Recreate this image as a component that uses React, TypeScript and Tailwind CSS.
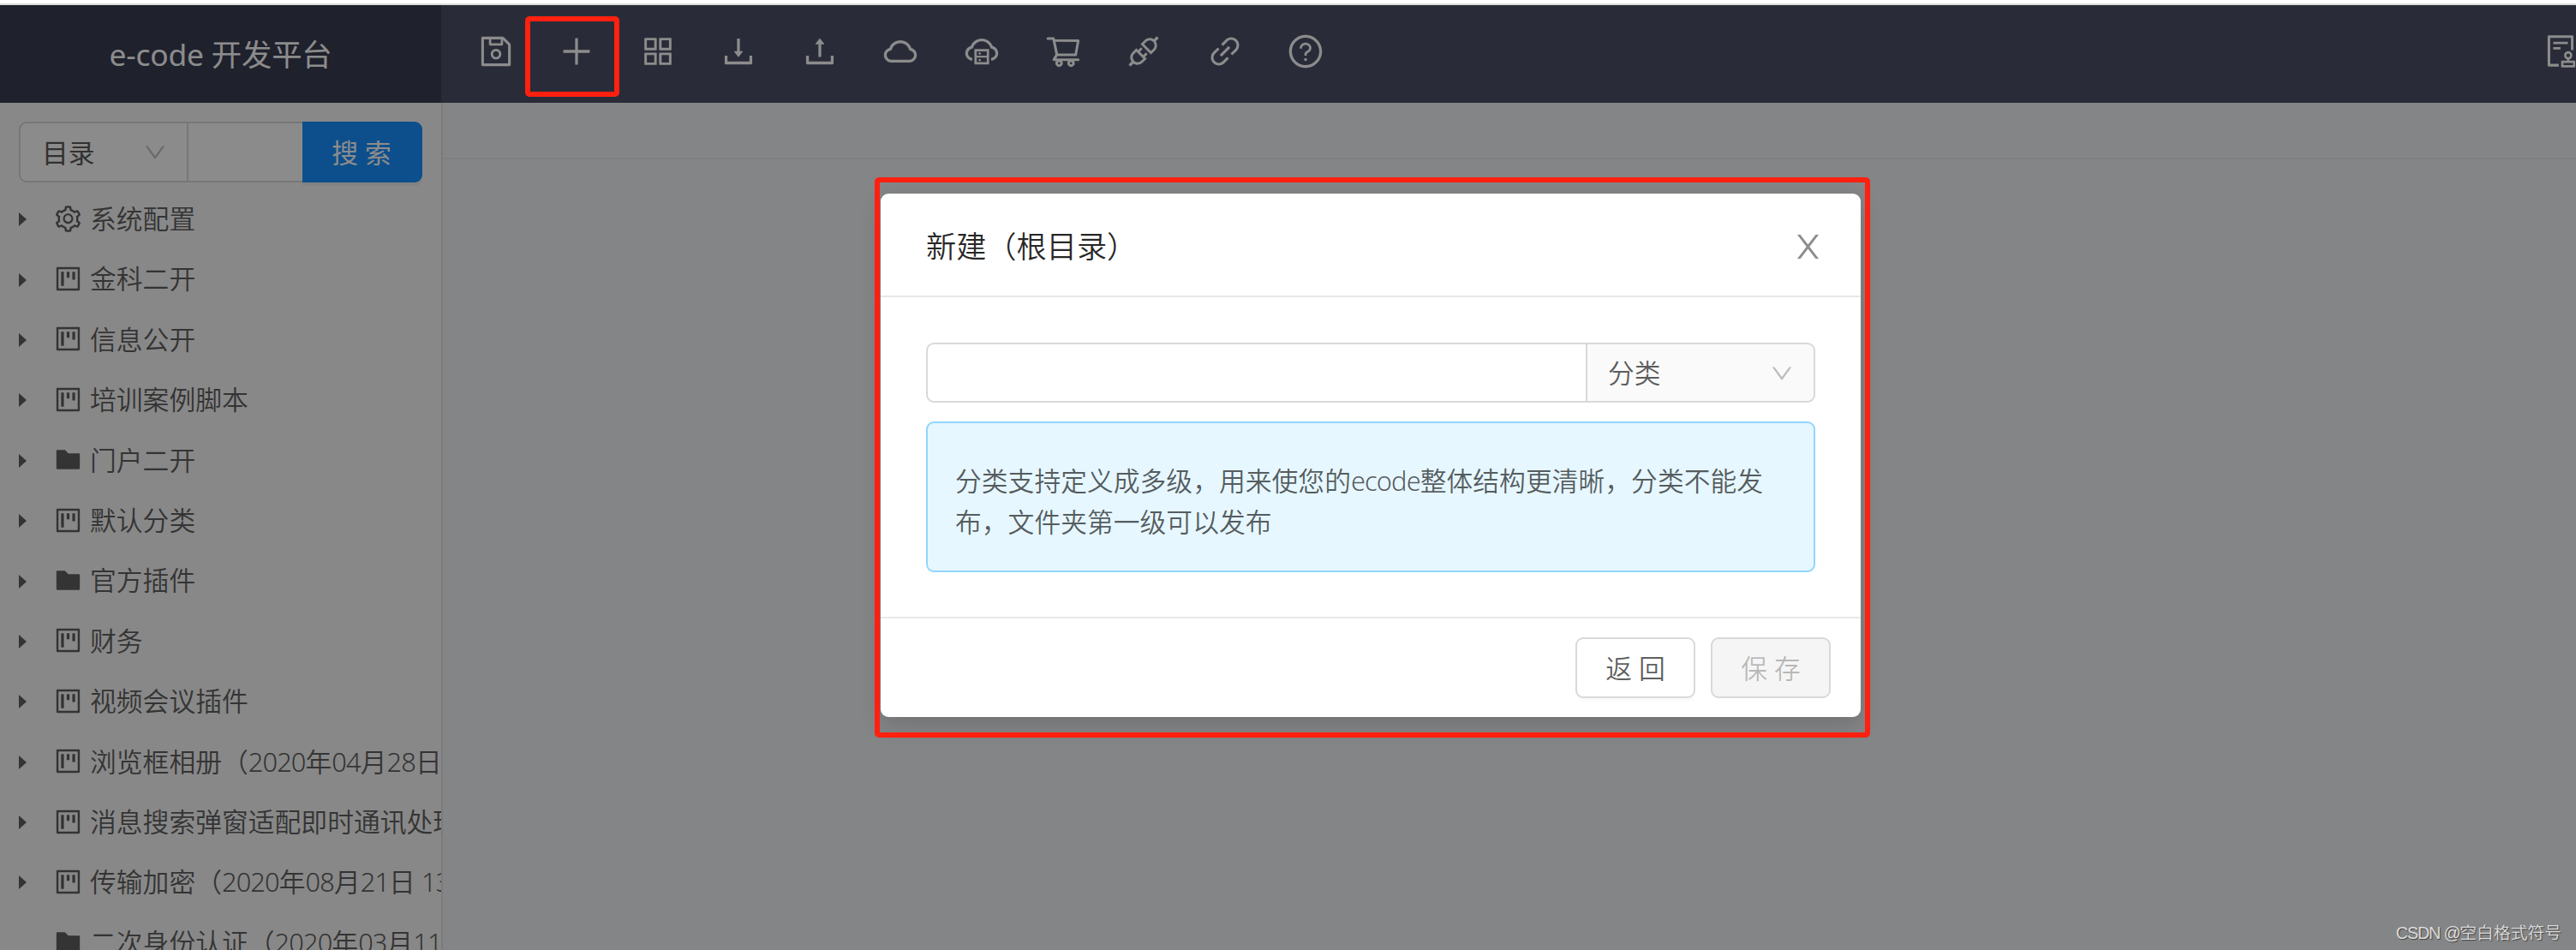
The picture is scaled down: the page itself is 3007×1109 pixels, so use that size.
import React from 'react';
import type { IconType } from 'react-icons';
import {
  AiFillFolder,
  AiOutlineApi,
  AiOutlineAppstore,
  AiOutlineAudit,
  AiOutlineCloud,
  AiOutlineCloudServer,
  AiOutlineDown,
  AiOutlineDownload,
  AiOutlineLink,
  AiOutlinePlus,
  AiOutlineProject,
  AiOutlineQuestionCircle,
  AiOutlineSave,
  AiOutlineSetting,
  AiOutlineShoppingCart,
  AiOutlineUpload,
} from 'react-icons/ai';

interface TreeNode {
  label: string;
  icon: IconType;
  leaf?: boolean;
}

const toolbar: IconType[] = [
  AiOutlineSave,
  AiOutlinePlus,
  AiOutlineAppstore,
  AiOutlineDownload,
  AiOutlineUpload,
  AiOutlineCloud,
  AiOutlineCloudServer,
  AiOutlineShoppingCart,
  AiOutlineApi,
  AiOutlineLink,
  AiOutlineQuestionCircle,
];

const tree: TreeNode[] = [
  { label: '系统配置', icon: AiOutlineSetting },
  { label: '金科二开', icon: AiOutlineProject },
  { label: '信息公开', icon: AiOutlineProject },
  { label: '培训案例脚本', icon: AiOutlineProject },
  { label: '门户二开', icon: AiFillFolder },
  { label: '默认分类', icon: AiOutlineProject },
  { label: '官方插件', icon: AiFillFolder },
  { label: '财务', icon: AiOutlineProject },
  { label: '视频会议插件', icon: AiOutlineProject },
  { label: '浏览框相册（2020年04月28日', icon: AiOutlineProject },
  { label: '消息搜索弹窗适配即时通讯处理', icon: AiOutlineProject },
  { label: '传输加密（2020年08月21日 13:', icon: AiOutlineProject },
  { label: '二次身份认证（2020年03月11', icon: AiFillFolder, leaf: true },
];

/** Tightens the latin runs inside a chinese label */
const MixedText = ({ text }: { text: string }) => (
  <>
    {text.split(/([\x20-\x7e]+)/).map((part, i) =>
      i % 2 ? (
        <span key={i} className="tracking-[-0.9px]">
          {part}
        </span>
      ) : (
        part
      )
    )}
  </>
);

const Header = () => (
  <header className="flex h-[114px] w-[3200px] shrink-0 bg-[#4b5066]">
    <div className="flex w-[515px] items-center justify-center bg-[#3a3d51] pt-[2px] text-[35.4px] text-white">
      <span className="whitespace-pre tracking-[-0.2px]">e-code 开发平台</span>
    </div>
    <div className="flex flex-1 items-center gap-[50.6px] pb-[6px] pl-[41.5px] pr-[188px] text-white">
      {toolbar.map((Icon, i) => (
        <Icon key={i} className="size-[44px] shrink-0" />
      ))}
      <AiOutlineAudit className="ml-auto size-[44px] shrink-0" />
    </div>
  </header>
);

const Sidebar = () => (
  <aside className="flex w-[517px] shrink-0 flex-col overflow-hidden border-r-2 border-[#e0e0e0] bg-[#f8f8f8]">
    {/* Search */}
    <div className="mt-[22px] ml-[22px] flex h-[71px] w-[471px] shrink-0 text-[30.8px]">
      <div className="flex w-[198px] items-center justify-between rounded-l-[9px] border-2 border-[#d9d9d9] bg-[#fefefe] pt-[1px] pl-[25px] pr-[22px] text-[#595959]">
        目录
        <AiOutlineDown className="size-[30px] text-[#bfbfbf]" />
      </div>
      <div className="w-[133px] border-y-2 border-[#d9d9d9] bg-[#fefefe]" />
      <button className="flex flex-1 items-center justify-center gap-[8px] rounded-r-[9px] bg-[#1890ff] pt-[2px] pr-[2px] text-white shadow-[0_4px_0_rgba(0,0,0,0.045)]">
        <span>搜</span>
        <span>索</span>
      </button>
    </div>

    {/* Tree */}
    <ul className="mt-[7px] text-[30.8px] font-[350] text-[#606060]">
      {tree.map(({ label, icon: Icon, leaf }) => (
        <li key={label} className="flex h-[70.4px] items-center whitespace-nowrap pl-[22px]">
          <svg viewBox="0 0 9 16" className="mt-[2px] h-[16px] w-[9px] shrink-0" fill="currentColor">
            {!leaf && <path d="M0 0L9 8L0 16Z" />}
          </svg>
          <Icon className="ml-[31px] mr-[8px] size-[35px] shrink-0" />
          <span className="whitespace-pre">
            <MixedText text={label} />
          </span>
        </li>
      ))}
    </ul>
  </aside>
);

const CreateModal = () => (
  <div className="flex h-[611px] w-[1144px] flex-col rounded-[9px] bg-white text-[30.8px] font-[350] text-black/65 shadow-[0_9px_26px_rgba(0,0,0,0.15)]">
    <div className="flex h-[121px] items-center justify-between border-b-2 border-[#e8e8e8] pl-[53px] pr-[49px] pt-[4px]">
      <h3 className="text-[35.2px] text-black/85">新建（根目录）</h3>
      <svg viewBox="0 0 25 28" className="h-[28px] w-[25px] text-black/45" fill="currentColor">
        <path d="M0 0H3.6L12.5 11.6L21.4 0H25L14.3 14L25 28H21.4L12.5 16.4L3.6 28H0L10.7 14Z" />
      </svg>
    </div>

    <div className="flex flex-1 flex-col px-[53px] pt-[53px]">
      <div className="flex h-[70px]">
        <div className="flex-1 rounded-l-[9px] border-2 border-[#d9d9d9]" />
        <div className="flex w-[266px] items-center justify-between rounded-r-[9px] border-2 border-l-0 border-[#d9d9d9] bg-[#fafafa] pl-[24px] pr-[22px] pt-[1px]">
          分类
          <AiOutlineDown className="size-[30px] text-black/25" />
        </div>
      </div>
      <div className="mt-[22px] h-[176px] rounded-[9px] border-2 border-[#91d5ff] bg-[#e6f7ff] pl-[32px] pt-[43px] leading-[48px] whitespace-nowrap">
        <MixedText text="分类支持定义成多级，用来使您的ecode整体结构更清晰，分类不能发" />
        <br />
        布，文件夹第一级可以发布
      </div>
    </div>

    <div className="flex h-[117px] items-start justify-end gap-[18px] border-t-2 border-[#e8e8e8] pr-[35px] pt-[22px]">
      <button className="flex h-[71px] w-[140px] items-center justify-center gap-[8px] rounded-[9px] border-2 border-[#d9d9d9] bg-white pt-[1px] shadow-[0_4px_0_rgba(0,0,0,0.015)]">
        <span>返</span>
        <span>回</span>
      </button>
      <button
        disabled
        className="flex h-[71px] w-[140px] items-center justify-center gap-[8px] rounded-[9px] border-2 border-[#d9d9d9] bg-[#f5f5f5] pt-[1px] text-black/25"
      >
        <span>保</span>
        <span>存</span>
      </button>
    </div>
  </div>
);

const App = () => (
  <div className="flex h-[1109px] w-full flex-col overflow-hidden bg-white font-['Noto_Sans','Noto_Sans_CJK_SC',sans-serif]">
    <div className="h-[6px] shrink-0 border-b-2 border-[#dadedb]" />

    <div className="relative flex min-h-0 flex-1 flex-col overflow-hidden">
      <Header />
      <div className="flex min-h-0 flex-1">
        <Sidebar />
        <main className="flex-1 bg-[#f0f2f5]">
          <div className="h-[66px] border-b-2 border-[#e8e8e8]" />
        </main>
      </div>

      {/* Mask and dialog */}
      <div className="absolute inset-y-0 left-0 flex w-[3200px] items-start justify-center bg-black/45 pt-[220px]">
        <CreateModal />
      </div>

      {/* Highlight marks */}
      <div className="absolute left-[613px] top-[13px] h-[94px] w-[110px] rounded-[5px] border-6 border-[#ff2010]" />
      <div className="absolute left-[1021px] top-[201px] h-[654px] w-[1162px] rounded-[5px] border-6 border-[#ff2010]" />

      <div className="absolute bottom-[4px] right-[17px] font-['Liberation_Sans','Noto_Sans_CJK_SC',sans-serif] text-[19.8px] font-[350] text-[#dcdcdc] [text-shadow:1px_1px_1px_#444]">
        <span className="tracking-[-1.2px]">CSDN @</span>空白格式符号
      </div>
    </div>
  </div>
);

export default App;
